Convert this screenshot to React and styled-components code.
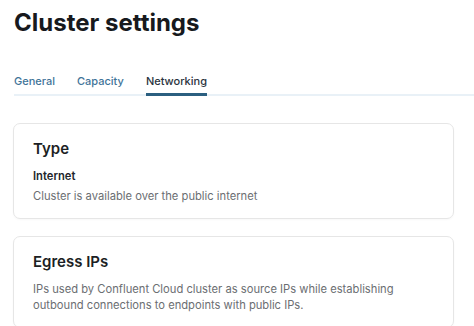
import React from "react";
import styled, { createGlobalStyle } from "styled-components";

const GlobalStyle = createGlobalStyle`
  html, body {
    margin: 0;
    padding: 0;
    background: #ffffff;
  }
  body {
    font-family: Inter, "Noto Sans", sans-serif;
    color: #1f2328;
  }
`;

const Page = styled.div`
  padding: 5px 20px 0px 13px;
  overflow: hidden;
  height: 326px;
  box-sizing: border-box;
`;

const Title = styled.h1`
  margin: 0px 0px 0px 1px;
  font-size: 24px;
  line-height: 36px;
  font-weight: 700;
  color: #17191d;
`;

const Tabs = styled.div`
  display: flex;
  gap: 22px;
  margin: 33px -20px 0px 1px;
  border-bottom: 2px solid #e9f1f7;
`;

const Tab = styled.div`
  font-size: 11px;
  line-height: 15px;
  font-weight: 500;
  padding-bottom: 4px;
  margin-bottom: -2px;
  color: ${(p) => (p.active ? "#2b3440" : "#3f7499")};
  border-bottom: 3px solid ${(p) => (p.active ? "#2b5f80" : "transparent")};
`;

const Card = styled.section`
  margin-top: ${(p) => p.gap || 0}px;
  border: 1px solid #e6e6e6;
  border-radius: 7px;
  padding: 14px 19px 14px 19px;
  box-shadow: 0 1px 2px rgba(0, 0, 0, 0.03);
`;

const CardTitle = styled.h2`
  margin: 0px 0px 8px 0px;
  font-size: 15px;
  line-height: 22px;
  font-weight: 600;
  color: #1c1f24;
`;

const Label = styled.div`
  font-size: 11.2px;
  line-height: 16px;
  font-weight: 600;
  color: #22262b;
  margin-bottom: 4px;
`;

const Text = styled.p`
  margin: 0;
  font-size: 11.2px;
  line-height: 16px;
  color: #6b6e72;
`;

export default function App() {
  return (
    <>
      <GlobalStyle />
      <Page>
        <Title>Cluster settings</Title>
        <Tabs>
          <Tab>General</Tab>
          <Tab>Capacity</Tab>
          <Tab active>Networking</Tab>
        </Tabs>
        <Card gap={27}>
          <CardTitle>Type</CardTitle>
          <Label>Internet</Label>
          <Text>Cluster is available over the public internet</Text>
        </Card>
        <Card gap={17}>
          <CardTitle>Egress IPs</CardTitle>
          <Text>
            IPs used by Confluent Cloud cluster as source IPs while establishing
            <br />
            outbound connections to endpoints with public IPs.
          </Text>
        </Card>
      </Page>
    </>
  );
}
